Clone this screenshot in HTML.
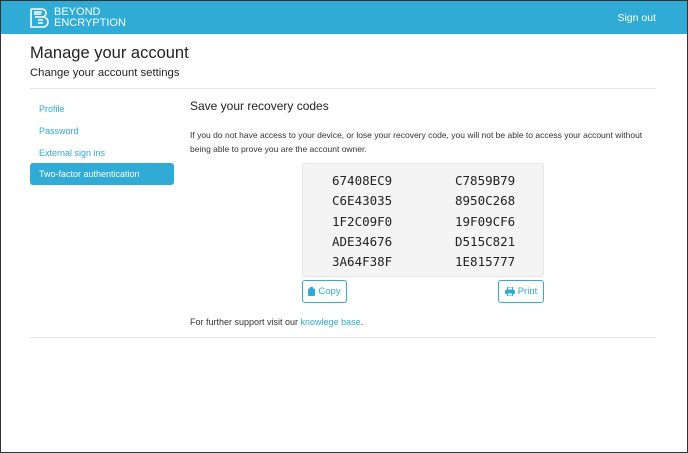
<!DOCTYPE html>
<html><head><style>
*{box-sizing:border-box;margin:0;padding:0}
body{width:688px;height:453px;overflow:hidden;font-family:"Liberation Sans",sans-serif;background:#fff;position:relative;color:#222}
.frame{position:absolute;inset:0;border:1px solid #333}
.hdr{position:absolute;left:1px;right:1px;top:1px;height:33px;background:#2fabd5;color:#fff}
.logo{position:absolute;left:28px;top:6px}
.lt{position:absolute;left:53px;top:6px;font-size:11px;line-height:10.5px;letter-spacing:0}
.so{position:absolute;right:31px;top:11px;font-size:10.5px}
.a{position:absolute;white-space:nowrap}
.nav{font-size:9px;color:#2fabd5}
.code{font-family:"DejaVu Sans Mono","Liberation Mono",monospace;font-size:12.5px;color:#222}
.btn{position:absolute;border:1px solid #2fabd5;border-radius:3px;color:#2fabd5;font-size:9.5px;display:flex;align-items:center;justify-content:center;gap:3px}
</style></head><body>
<div class="frame"></div>
<div class="hdr">
<svg class="logo" width="20" height="22" viewBox="0 0 20 22"><path d="M2 2h11a4 4 0 0 1 0 8H6M6 10h8a5 5 0 0 1 0 10H2V2M5 5h8M5 7h7M9 13h5M9 16h5" fill="none" stroke="#fff" stroke-width="1.6"/></svg>
<div class="lt">BEYOND<br>ENCRYPTION</div>
<div class="so">Sign out</div>
</div>
<div class="a" style="left:30px;top:44px;font-size:16.5px;color:#222">Manage your account</div>
<div class="a" style="left:30px;top:67px;font-size:11.3px">Change your account settings</div>
<div class="a" style="left:30px;top:88px;width:626px;border-top:1px solid #e5e5e5"></div>
<div class="a nav" style="left:39px;top:104px">Profile</div>
<div class="a nav" style="left:39px;top:126px">Password</div>
<div class="a nav" style="left:39px;top:148px">External sign ins</div>
<div class="a" style="left:30px;top:163px;width:144px;height:22px;background:#2fabd5;border-radius:3px;color:#fff;font-size:9px;padding:6px 9px">Two-factor authentication</div>
<div class="a" style="left:190px;top:99px;font-size:12px">Save your recovery codes</div>
<div class="a" style="left:190px;top:129px;font-size:8.5px;line-height:13.5px;color:#333">If you do not have access to your device, or lose your recovery code, you will not be able to access your account without<br>being able to prove you are the account owner.</div>
<div class="a" style="left:302px;top:163px;width:242px;height:114px;background:#f4f4f4;border:1px solid #e6e6e6;border-radius:3px"></div>
<div class="a code" style="left:332px;top:171px;line-height:20.3px">67408EC9<br>C6E43035<br>1F2C09F0<br>ADE34676<br>3A64F38F</div>
<div class="a code" style="left:455px;top:171px;line-height:20.3px">C7859B79<br>8950C268<br>19F09CF6<br>D515C821<br>1E815777</div>
<div class="btn" style="left:302px;top:280px;width:45px;height:23px"><svg width="7" height="9"><rect x="0" y="1.5" width="7" height="7.5" rx="1" fill="#2fabd5"/><rect x="2" y="0" width="3" height="2.5" fill="#2fabd5"/></svg>Copy</div>
<div class="btn" style="left:498px;top:280px;width:46px;height:23px"><svg width="10" height="9"><rect x="2.5" y="0" width="5" height="3" fill="none" stroke="#2fabd5"/><rect x="0" y="3" width="10" height="4" rx="1" fill="#2fabd5"/><rect x="2.5" y="6" width="5" height="3" fill="#fff" stroke="#2fabd5"/></svg>Print</div>
<div class="a" style="left:190px;top:317px;font-size:9px;color:#333">For further support visit our <span style="color:#2fabd5">knowlege base</span>.</div>
<div class="a" style="left:30px;top:337px;width:626px;border-top:1px solid #e5e5e5"></div>
</body></html>
